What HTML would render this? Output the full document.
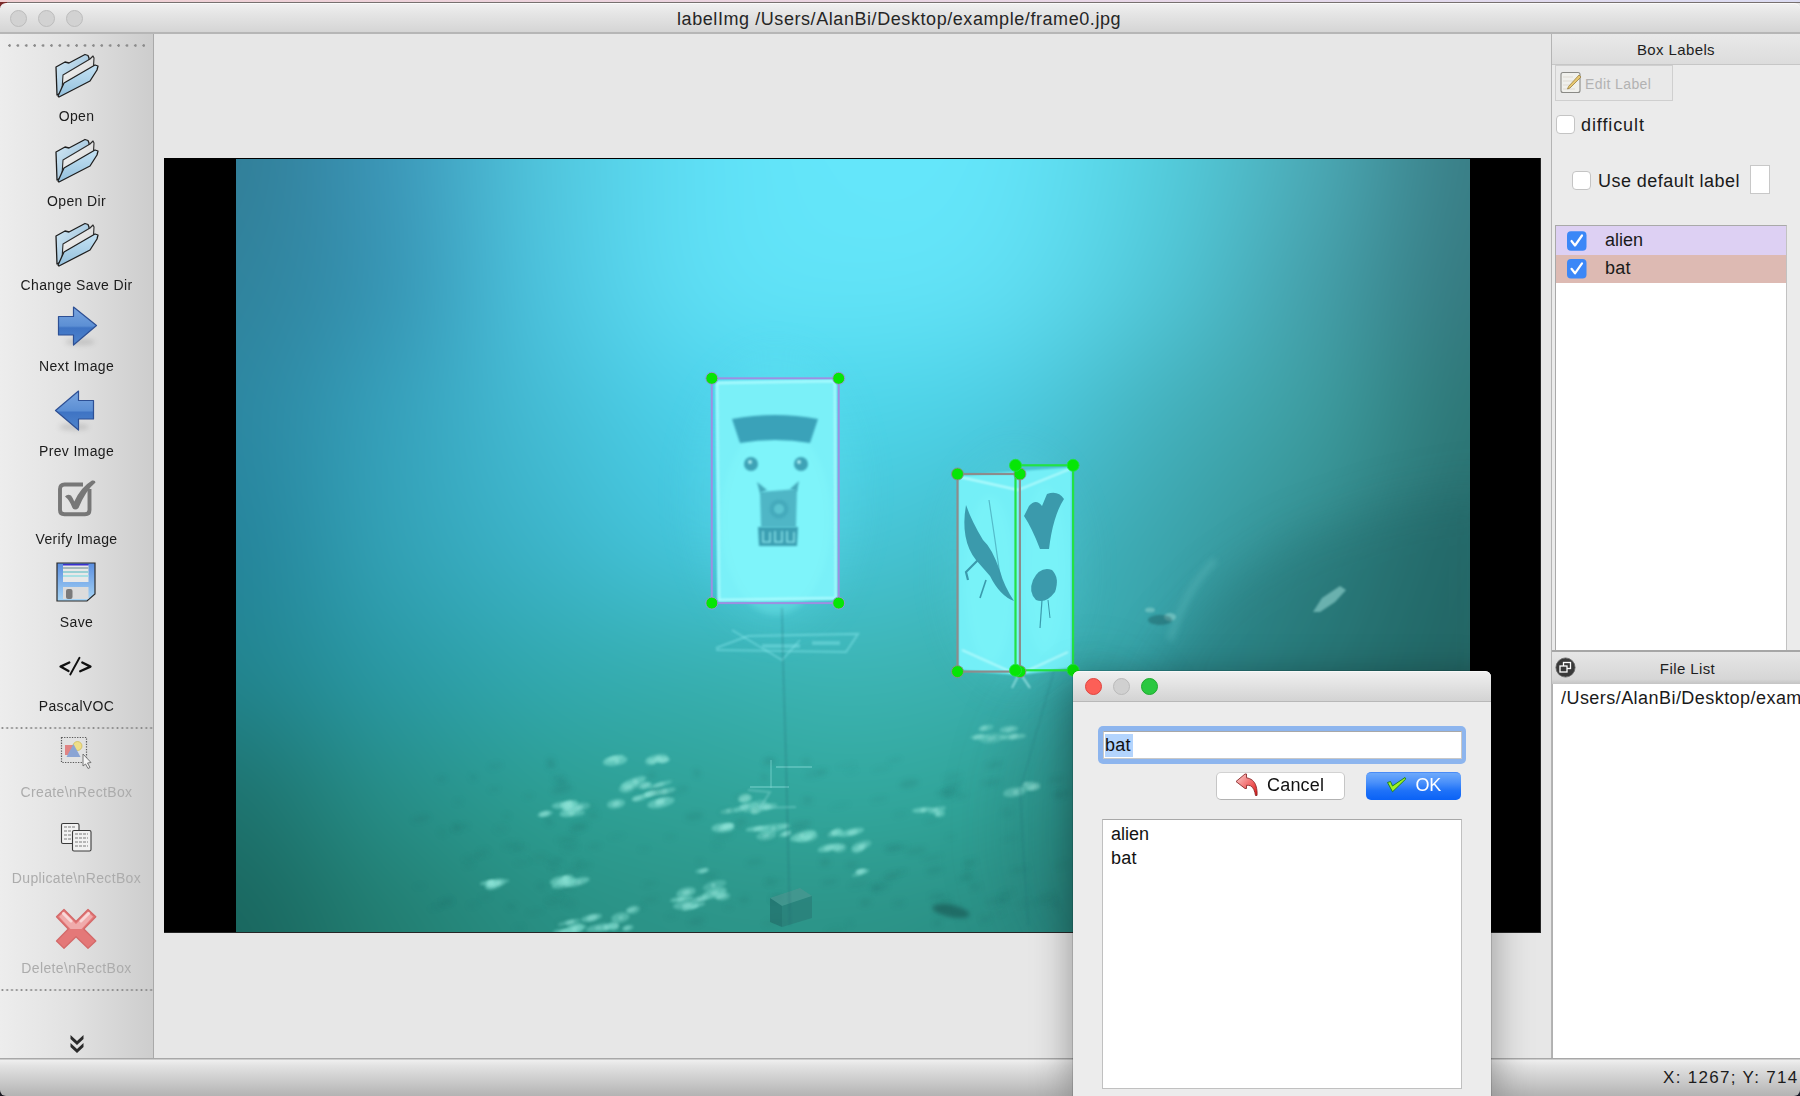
<!DOCTYPE html>
<html><head><meta charset="utf-8">
<style>
*{box-sizing:border-box;margin:0;padding:0}
html,body{width:1800px;height:1096px;overflow:hidden;background:#e8e8e8;font-family:"Liberation Sans",sans-serif;color:#1a1a1a}
.abs{position:absolute}
#topstrip{left:0;top:0;width:1800px;height:3px;background:linear-gradient(90deg,#f0cfd2 0%,#e8d6e6 60%,#dcdcf2 100%)}
#topline{left:0;top:1.6px;width:1800px;height:1.4px;background:#77706f}
#titlebar{left:0;top:3px;width:1800px;height:30px;background:linear-gradient(#f0f0f0 0%,#e6e6e6 30%,#d4d4d4 100%);border-top:1px solid #fbfbfb;border-radius:6px 6px 0 0}
#titleborder{left:0;top:32px;width:1800px;height:2px;background:#b6b6b6}
.tl{width:17px;height:17px;border-radius:50%;background:#d2d2d2;border:1px solid #bcbcbc;top:10px}
#title{left:677px;top:7px;font-size:18px;letter-spacing:0.57px;color:#262626;white-space:nowrap;line-height:24px}
#sidebar{left:0;top:34px;width:154px;height:1024px;background:linear-gradient(90deg,#ededed 0%,#e2e2e2 45%,#cdcdcd 100%);border-right:1px solid #a9a9a9}
#canvasbg{left:154px;top:34px;width:1397px;height:1024px;background:#e7e7e7}
#statusbar{left:0;top:1058px;width:1800px;height:38px;border-radius:0 0 6px 6px;background:linear-gradient(#a8a8a8 0px,#a8a8a8 1px,#efefef 2px,#e2e2e2 8px,#c6c6c6 26px,#b3b3b3 100%)}
.lbl{position:absolute;left:0;width:153px;text-align:center;font-size:14px;letter-spacing:0.35px;white-space:nowrap;color:#1c1c1c;line-height:16px}
.lbl.dis{color:#acacac}
.sep{position:absolute;left:0;width:154px;height:2px;background-image:radial-gradient(circle,#8a8a8a 0.9px,transparent 1.2px);background-size:4.8px 2px}
</style></head><body>
<div id="topstrip" class="abs"></div>
<div id="topline" class="abs"></div>
<div class="abs" style="left:0;top:2px;width:7px;height:6px;background:#7a2a2a"></div>
<div id="titlebar" class="abs"></div>
<div id="titleborder" class="abs"></div>
<div class="abs tl" style="left:9.8px"></div>
<div class="abs tl" style="left:37.6px"></div>
<div class="abs tl" style="left:66px"></div>
<div id="title" class="abs">labelImg /Users/AlanBi/Desktop/example/frame0.jpg</div>

<div id="sidebar" class="abs"></div>
<div id="canvasbg" class="abs"></div>
<div class="abs" style="left:0;top:1088px;width:8px;height:8px;background:#1a1a22"></div>
<div class="abs" style="left:1792px;top:1088px;width:8px;height:8px;background:#1a1a28"></div>
<div id="statusbar" class="abs"></div>

<!-- image -->
<div class="abs" style="left:164px;top:158px;width:1377px;height:775px;background:#000;border-right:1px solid #262626;border-bottom:1px solid #262626"></div>
<canvas id="uw" class="abs" width="1234" height="773" style="left:236px;top:159px;width:1234px;height:773px"></canvas>
<script>
(function(){
var C=document.getElementById('uw'),W=1234,H=773,ctx=C.getContext('2d');
var G=[
["32809a","3c98b8","50c4dc","5edef4","64e6fa","62e2f6","54ccdc","4aa8b4","3a8088"],
["30849e","3898b6","4cc2dc","5cdcf2","60e2f6","5edcf0","50c4d4","44a0aa","367c82"],
["2c88a2","36a0ba","44bcd4","4cd0e8","4ed4e8","4ccade","44b2be","3c9a9e","2e7878"],
["26869c","32a0b4","3cb4c8","44c4d8","46c4d4","42bac6","3ca6ae","348e90","2a7272"],
["22848e","2a98a2","32a8ae","38b0b2","3cb4b4","3aaeae","36a0a4","2e8484","286e6c"],
["1e7470","268c86","2c9c92","30a298","32a69c","30a096","2e908c","2a7c7a","266c68"],
["1a6860","227e72","288e82","2c9488","2c9488","2a8e84","2a827c","267470","246a66"]];
var nx=G[0].length,ny=G.length,P=[];
for(var j=0;j<ny;j++){P[j]=[];for(var i=0;i<nx;i++){var h=G[j][i];P[j][i]=[parseInt(h.substr(0,2),16),parseInt(h.substr(2,2),16),parseInt(h.substr(4,2),16)];}}
var id=ctx.createImageData(W,H),d=id.data;
function cr(p0,p1,p2,p3,t){return 0.5*((2*p1)+(-p0+p2)*t+(2*p0-5*p1+4*p2-p3)*t*t+(-p0+3*p1-3*p2+p3)*t*t*t);}
function gp(j,i,c){j=Math.max(0,Math.min(ny-1,j));i=Math.max(0,Math.min(nx-1,i));return P[j][i][c];}
for(var y=0;y<H;y++){var fy=y/(H-1)*(ny-1),j0=Math.min(ny-2,Math.floor(fy)),ty=fy-j0;
 for(var x=0;x<W;x++){var fx=x/(W-1)*(nx-1),i0=Math.min(nx-2,Math.floor(fx)),tx=fx-i0;
  var o=(y*W+x)*4;
  for(var c=0;c<3;c++){var r=[];for(var k=-1;k<3;k++){r.push(cr(gp(j0+k,i0-1,c),gp(j0+k,i0,c),gp(j0+k,i0+1,c),gp(j0+k,i0+2,c),tx));}
   d[o+c]=cr(r[0],r[1],r[2],r[3],ty);}
  d[o+3]=255;}}
ctx.putImageData(id,0,0);
ctx.translate(-236,-159);
function poly(pts,col){ctx.fillStyle=col;ctx.beginPath();ctx.moveTo(pts[0],pts[1]);for(var k=2;k<pts.length;k+=2)ctx.lineTo(pts[k],pts[k+1]);ctx.closePath();ctx.fill();}
function ell(x,y,rx,ry,col,rot){ctx.fillStyle=col;ctx.beginPath();ctx.ellipse(x,y,rx,ry,rot||0,0,Math.PI*2);ctx.fill();}
function ln(pts,col,w){ctx.strokeStyle=col;ctx.lineWidth=w;ctx.beginPath();ctx.moveTo(pts[0],pts[1]);for(var k=2;k<pts.length;k+=2)ctx.lineTo(pts[k],pts[k+1]);ctx.stroke();}
// glow around panel and prism
ctx.filter='blur(18px)';
ell(776,492,80,135,'rgba(110,235,245,0.2)');
ell(1015,570,65,115,'rgba(100,225,235,0.18)');
// seabed light patches
var seed=7;function rnd(){seed=(seed*16807)%2147483647;return (seed-1)/2147483646;}
ctx.filter='blur(1.8px)';
[[545,801,592,815,7],[600,782,669,806,11],[647,757,669,764,3],[614,757,629,762,2],[721,797,779,812,7],[713,824,728,830,2],[750,826,787,837,5],[798,830,864,852,9],[853,870,867,878,2],[673,863,724,911,9],[552,874,592,885,5],[468,874,501,889,4],[559,907,647,932,11],[1014,784,1043,793,4],[966,727,1014,740,5],[922,808,944,815,3]].forEach(function(c){
 for(var k=0;k<c[4];k++){var x=c[0]+rnd()*(c[2]-c[0]),y=c[1]+rnd()*(c[3]-c[1]);
  ell(x,y,5+rnd()*9,2+rnd()*3,'rgba(128,222,208,'+(0.35+rnd()*0.25)+')',-0.35+rnd()*0.3);
  ell(x+rnd()*4-2,y,2+rnd()*4,1.2+rnd()*1.5,'rgba(165,240,228,0.45)',-0.3);}
});
// dark speckles on seabed
ctx.filter='blur(2.5px)';
for(var k=0;k<160;k++){var x=420+rnd()*650,y=760+rnd()*172;ell(x,y,3+rnd()*8,1.5+rnd()*3,'rgba(25,95,92,'+(0.05+rnd()*0.1)+')',-0.2);}
ctx.filter='blur(0.6px)';
ln([750,787,789,787],'rgba(120,210,205,0.7)',1.6);ln([776,767,812,767],'rgba(120,210,205,0.7)',1.6);ln([771,760,771,788],'rgba(120,210,205,0.6)',1.4);
poly([770,898,800,888,812,896,782,906],'rgba(80,150,145,0.6)');
poly([770,898,782,906,782,927,770,922],'rgba(30,95,95,0.5)');poly([782,906,812,896,812,918,782,927],'rgba(40,110,108,0.45)');
ctx.filter='blur(2px)';
ell(951,911,19,6,'rgba(25,85,82,0.6)',0.2);

// right rock
ctx.filter='blur(30px)';ell(1090,830,90,160,'rgba(18,70,70,0.16)');
ctx.filter='blur(24px)';
poly([1130,720,1170,640,1220,585,1290,540,1390,505,1500,485,1500,720],'rgba(18,75,75,0.24)');
ctx.filter='blur(3px)';
ctx.strokeStyle='rgba(110,200,200,0.28)';ctx.lineWidth=7;ctx.beginPath();ctx.moveTo(1170,640);ctx.quadraticCurveTo(1185,590,1215,560);ctx.stroke();
ctx.filter='blur(1.2px)';
poly([1313,612,1322,598,1340,586,1346,590,1335,602,1320,612],'rgba(150,215,210,0.6)');
ell(1150,610,5,2.5,'rgba(150,215,210,0.5)',0);
ell(1170,617,6,4,'rgba(150,215,210,0.55)',0);
ell(1160,620,12,5,'rgba(20,70,75,0.35)',0);
// panel 1
ctx.filter='blur(1px)';
poly([716,381,836,379,837,600,718,602],'#7af0f8');
ctx.filter='blur(3px)';
ell(776,520,55,95,'rgba(140,255,255,0.25)');
ctx.filter='blur(0.8px)';
ln([717,383,835,381,836,598,719,600,717,383],'rgba(175,252,255,0.9)',2.5);
ctx.fillStyle='#3aa2b9';ctx.beginPath();ctx.moveTo(732,419);ctx.quadraticCurveTo(775,411,818,419);ctx.lineTo(810,443);ctx.quadraticCurveTo(775,437,740,443);ctx.closePath();ctx.fill();
ell(751,464,7,7,'#3ea2b6');ell(801,464,7,7,'#3ea2b6');
ell(750,462,2,2,'rgba(200,255,255,0.8)');ell(799,462,2,2,'rgba(200,255,255,0.8)');
poly([760,492,797,489,796,527,761,527],'#4fb6c6');
poly([757,482,767,490,760,493],'#45a8ba');poly([799,481,790,489,797,491],'#45a8ba');
ell(779,509,9.5,9.5,'#45aabc');ell(779,509,5,5,'#5cc4d0');
poly([758,527,798,527,797,546,759,546],'#3c9fb2');
ln([763,531,763,542,770,542,770,532],'rgba(150,240,245,0.8)',1.6);
ln([775,531,775,542,782,542,782,531],'rgba(150,240,245,0.8)',1.6);
ln([787,531,787,542,794,542,794,532],'rgba(150,240,245,0.8)',1.6);
// stand frame below panel
ctx.filter='blur(1px)';
ln([716,648,748,636,858,634,846,652,716,650],'rgba(140,235,240,0.45)',2.2);
ln([732,630,782,660,800,640],'rgba(140,235,240,0.45)',1.8);
ln([762,646,800,646],'rgba(150,240,245,0.35)',4);
ln([812,643,840,643],'rgba(150,240,245,0.35)',4);
ln([782,608,783,660,786,760,790,925],'rgba(30,100,110,0.45)',1);
ln([1060,650,1020,790,1028,925],'rgba(30,100,110,0.3)',1);
ln([748,790,770,792,760,808,796,807],'rgba(140,220,215,0.4)',2);
// prism
ctx.filter='blur(1px)';
poly([958,476,1072,467,1072,668,1018,675,958,670],'#74eff7');
ctx.filter='blur(4px)';
ell(990,580,25,85,'rgba(140,255,255,0.2)');ell(1045,570,22,85,'rgba(140,255,255,0.18)');
ctx.filter='blur(0.8px)';
ln([960,477,1018,490,1070,469],'rgba(200,255,255,0.85)',1.8);
ln([962,650,1018,675,1068,652],'rgba(200,255,255,0.85)',1.8);
ln([1018,490,1018,675],'rgba(150,240,245,0.6)',1.5);
ln([1018,676,1012,688],'rgba(200,255,255,0.7)',1.5);ln([1022,676,1030,688],'rgba(200,255,255,0.7)',1.5);
// bats
ctx.filter='blur(0.6px)';
ctx.fillStyle='#3b9aac';
ctx.beginPath();ctx.moveTo(966,505);ctx.quadraticCurveTo(960,540,976,560);ctx.lineTo(990,576);ctx.quadraticCurveTo(1000,596,1014,601);ctx.quadraticCurveTo(1004,586,1000,571);ctx.quadraticCurveTo(992,548,983,540);ctx.quadraticCurveTo(972,522,966,505);ctx.fill();
ln([978,560,966,572,968,580],'#3b9aac',2.2);ln([986,580,980,598],'#3b9aac',1.6);
ln([989,500,995,540,1002,590],'rgba(60,150,170,0.6)',1.2);
ctx.beginPath();ctx.moveTo(1040,549);ctx.quadraticCurveTo(1032,528,1024,516);ctx.lineTo(1029,506);ctx.quadraticCurveTo(1036,498,1042,506);ctx.lineTo(1047,494);ctx.quadraticCurveTo(1058,490,1064,499);ctx.quadraticCurveTo(1053,516,1049,549);ctx.closePath();ctx.fill();
ctx.beginPath();ctx.moveTo(1033,580);ctx.quadraticCurveTo(1040,566,1052,570);ctx.quadraticCurveTo(1060,578,1055,592);ctx.quadraticCurveTo(1046,604,1036,600);ctx.quadraticCurveTo(1028,592,1033,580);ctx.fill();
ln([1042,600,1040,628],'#3b9aac',1.2);ln([1048,600,1050,618],'#3b9aac',1);
ctx.filter='none';
})();
</script>



<!-- sidebar icons -->
<div class="abs" style="left:8px;top:44px;width:140px;height:3px;background-image:radial-gradient(circle at 1.5px 1.5px,#8c8c8c 1.1px,transparent 1.5px);background-size:8.4px 3px"></div>
<svg class="abs" style="left:0;top:0" width="154" height="1058" viewBox="0 0 154 1058">
<defs>
<filter id="sh" x="-50%" y="-100%" width="200%" height="300%"><feGaussianBlur stdDeviation="2.5"/></filter>
<linearGradient id="fb" x1="0" y1="0" x2="1" y2="1"><stop offset="0" stop-color="#d6ebf7"/><stop offset="1" stop-color="#8ab4d2"/></linearGradient>
<linearGradient id="ff" x1="0" y1="0" x2="0" y2="1"><stop offset="0" stop-color="#c4e2f4"/><stop offset="1" stop-color="#94c0dc"/></linearGradient>
<linearGradient id="fp" x1="0" y1="0" x2="1" y2="1"><stop offset="0" stop-color="#fafafa"/><stop offset="1" stop-color="#cfcfcf"/></linearGradient>
<linearGradient id="ab" x1="0" y1="0" x2="0" y2="1"><stop offset="0" stop-color="#7aa6e0"/><stop offset="0.5" stop-color="#5c8fd4"/><stop offset="0.55" stop-color="#3f74c4"/><stop offset="1" stop-color="#4f84cc"/></linearGradient>
<linearGradient id="xr" x1="0" y1="0" x2="0" y2="1"><stop offset="0" stop-color="#f6c4c4"/><stop offset="0.5" stop-color="#e27a7a"/><stop offset="1" stop-color="#e88a8a"/></linearGradient>
<linearGradient id="fl" x1="0" y1="0" x2="0" y2="1"><stop offset="0" stop-color="#5a8ee0"/><stop offset="1" stop-color="#a8d6f6"/></linearGradient>

</defs>
<g transform="translate(50,48)">
<path d="M7,47 L6,19 L15,14 L19,15 L35,6.5 L38,7.5 L39,10 L39,30 Z" fill="url(#fb)" stroke="#1e1e1e" stroke-width="1.3" stroke-linejoin="round"/>
<path d="M12,42 L13,27 L40,11 L43,8 L44,10 L43,27 Z" fill="url(#fp)" stroke="#2a2a2a" stroke-width="1.1" stroke-linejoin="round"/>
<path d="M8,48 L14,35 L45,17 L48,18 L47,22 L40,33 L9,49 Z" fill="url(#ff)" stroke="#1e1e1e" stroke-width="1.3" stroke-linejoin="round"/>
</g>
<g transform="translate(50,133)">
<path d="M7,47 L6,19 L15,14 L19,15 L35,6.5 L38,7.5 L39,10 L39,30 Z" fill="url(#fb)" stroke="#1e1e1e" stroke-width="1.3" stroke-linejoin="round"/>
<path d="M12,42 L13,27 L40,11 L43,8 L44,10 L43,27 Z" fill="url(#fp)" stroke="#2a2a2a" stroke-width="1.1" stroke-linejoin="round"/>
<path d="M8,48 L14,35 L45,17 L48,18 L47,22 L40,33 L9,49 Z" fill="url(#ff)" stroke="#1e1e1e" stroke-width="1.3" stroke-linejoin="round"/>
</g>
<g transform="translate(50,217)">
<path d="M7,47 L6,19 L15,14 L19,15 L35,6.5 L38,7.5 L39,10 L39,30 Z" fill="url(#fb)" stroke="#1e1e1e" stroke-width="1.3" stroke-linejoin="round"/>
<path d="M12,42 L13,27 L40,11 L43,8 L44,10 L43,27 Z" fill="url(#fp)" stroke="#2a2a2a" stroke-width="1.1" stroke-linejoin="round"/>
<path d="M8,48 L14,35 L45,17 L48,18 L47,22 L40,33 L9,49 Z" fill="url(#ff)" stroke="#1e1e1e" stroke-width="1.3" stroke-linejoin="round"/>
</g>

<!-- next arrow -->
<ellipse cx="80" cy="342" rx="15" ry="3.5" fill="rgba(0,0,0,0.12)" filter="url(#sh)"/>
<path d="M58.5,316.5 L73.5,316.5 L73.5,307 L96.5,325.5 L73.5,345 L73.5,335 L58.5,335 Z" fill="url(#ab)" stroke="#2d4f94" stroke-width="1.2" stroke-linejoin="round"/>
<!-- prev arrow -->
<ellipse cx="74" cy="427" rx="15" ry="3.5" fill="rgba(0,0,0,0.12)" filter="url(#sh)"/>
<path d="M93.5,400.5 L78.5,400.5 L78.5,391 L55.5,410.5 L78.5,430 L78.5,419 L93.5,419 Z" fill="url(#ab)" stroke="#2d4f94" stroke-width="1.2" stroke-linejoin="round"/>
<!-- verify -->
<g transform="translate(50,474)">
<path d="M33,10.5 L14.5,10.5 Q10,10.5 10,15 L10,36 Q10,40.3 14.5,40.3 L35,40.3 Q39.5,40.3 39.5,36 L39.5,15" fill="none" stroke="#777" stroke-width="3.9"/>
<path d="M15,22.5 Q17.5,19.5 21,21.5 Q23,24 24.3,27.5 Q31,13 42,6.5 Q45.5,6 45.5,8.5 Q36,16 28.5,34 Q27,35.5 25,35.5 Q23,35.3 22.3,33.5 Q19.5,26 15,22.5 Z" fill="#777"/>
</g>
<!-- save -->
<path d="M57,563 L95,563 L95,594 L87,601 L57,601 Z" fill="url(#fl)" stroke="#2a2a2a" stroke-width="1.2"/>
<rect x="63" y="565" width="25.5" height="17" fill="#e8e8e8"/>
<rect x="63" y="567" width="25.5" height="2" fill="#a6b8b8"/><rect x="63" y="571" width="25.5" height="2" fill="#9ad0d4"/><rect x="63" y="575" width="25.5" height="2" fill="#a8e0e4"/>
<rect x="63" y="564" width="25.5" height="1.5" fill="#3a30d0"/>
<rect x="63" y="587" width="25.5" height="12" fill="#dcdcdc"/>
<rect x="66" y="589" width="6.5" height="10" rx="2" fill="#7a7a7a"/>
<!-- </> -->
<path d="M69.3,662.5 L60.5,666.6 L68.5,671" fill="none" stroke="#111" stroke-width="2.3" stroke-linecap="round" stroke-linejoin="round"/>
<path d="M79.5,657.8 L70.3,674.5" fill="none" stroke="#111" stroke-width="1.9" stroke-linecap="round"/>
<path d="M82.3,662.5 L90.5,666.6 L80.2,671.3" fill="none" stroke="#111" stroke-width="2.3" stroke-linecap="round" stroke-linejoin="round"/>
<!-- create -->
<rect x="61.5" y="737.5" width="25" height="25" fill="#e2e2e2" stroke="#5a5a5a" stroke-width="1.2" stroke-dasharray="1.3 1.3"/>
<rect x="65" y="745" width="9" height="10" fill="#e07a7a" opacity="0.9"/>
<circle cx="77.5" cy="746" r="4.5" fill="#eede88" stroke="#c8b040" stroke-width="0.6"/>
<path d="M73.5,744 L80.5,757 L66.5,757 Z" fill="#8aa4d4"/>
<path d="M83,754 L83,766 L85.5,764 L88,768.5 L90,767.5 L87.5,763 L91,762.5 Z" fill="#f4f4f4" stroke="#6a6a6a" stroke-width="0.9"/>
<!-- duplicate -->
<rect x="61.5" y="823.5" width="17.5" height="20" rx="1.5" fill="#f2f2f2" stroke="#3a3a3a" stroke-width="1.1"/>
<rect x="72.5" y="830.5" width="18.5" height="20.5" rx="1.5" fill="#f2f2f2" stroke="#3a3a3a" stroke-width="1.1"/>
<path d="M64,827h11M64,831h7M64,835h7M64,839h7M75,834h13M75,838h13M75,842h13M75,846h13" stroke="#7a7a7a" stroke-width="1" stroke-dasharray="3 1"/>
<!-- delete X -->
<g transform="translate(50,900)">
<path d="M14,9.5 L26,21.5 L38,9.5 L45.8,16.8 L33.8,29 L45.8,41 L38,48.3 L26,36.8 L14,48.3 L6.5,41 L18.3,29 L6.5,16.8 Z" fill="#e47878" stroke="#d46a6a" stroke-width="1.3" stroke-linejoin="round"/>
<path d="M14,12 L26,24 L38,12 L43,16.8 L31.5,29 L20.5,29 L9,16.8 Z" fill="#f2b4b4" opacity="0.85"/>
<path d="M13.5,13.5 L21,21" stroke="#fbe4e4" stroke-width="3" stroke-linecap="round" opacity="0.8"/>
<path d="M38.5,13.5 L31,21" stroke="#fbe4e4" stroke-width="3" stroke-linecap="round" opacity="0.8"/>
</g>
<!-- chevron -->
<path d="M70.5,1035 L77,1041 L83.5,1035 L83.5,1039 L77,1045 L70.5,1039 Z M70.5,1043 L77,1049 L83.5,1043 L83.5,1047 L77,1053 L70.5,1047 Z" fill="#2a2a2a"/>
</svg>
<div class="sep" style="top:727px"></div>
<div class="sep" style="top:989px"></div>


<!-- right panel -->
<div class="abs" style="left:1551px;top:34px;width:249px;height:1024px;background:#ebebeb;border-left:1px solid #b4b4b4"></div>
<div class="abs" style="left:1552px;top:34px;width:248px;height:31px;background:linear-gradient(#e9e9e9,#dcdcdc);border-bottom:1px solid #c6c6c6"></div>
<div class="abs txt" style="left:1552px;top:41px;width:248px;text-align:center;font-size:15px;line-height:18px;letter-spacing:0.38px;color:#1e1e1e">Box Labels</div>
<div class="abs" style="left:1555px;top:65px;width:118px;height:36px;border:1px solid #cfcfcf;background:#e9e9e9"></div>
<svg class="abs" style="left:1558px;top:70px" width="26" height="26" viewBox="0 0 26 26">
<rect x="3" y="2.5" width="19" height="20" rx="2" fill="#f0f0ec" stroke="#8a8a86" stroke-width="1.1"/>
<path d="M5,7h10M5,11h10M5,15h10M5,19h12" stroke="#dedad2" stroke-width="1"/>
<path d="M21,5 L23,7 L12,18 L9.5,19 L10.5,16.5 Z" fill="#e8c870" stroke="#9a8040" stroke-width="0.8"/>
</svg>
<div class="abs" style="left:1585px;top:76px;font-size:14px;line-height:16px;letter-spacing:0.4px;color:#b2b2b2;white-space:nowrap">Edit Label</div>
<div class="abs" style="left:1556px;top:115px;width:19px;height:19px;border-radius:4px;background:#fff;border:1px solid #c4c4c4"></div>
<div class="abs" style="left:1581px;top:115px;font-size:18px;line-height:20px;letter-spacing:0.9px;color:#1a1a1a;white-space:nowrap">difficult</div>
<div class="abs" style="left:1572px;top:171px;width:19px;height:19px;border-radius:4px;background:#fff;border:1px solid #c4c4c4"></div>
<div class="abs" style="left:1598px;top:171px;font-size:18px;line-height:20px;letter-spacing:0.46px;color:#1a1a1a;white-space:nowrap">Use default label</div>
<div class="abs" style="left:1750px;top:165px;width:20px;height:29px;background:#fff;border:1px solid #c8c8c8"></div>
<div class="abs" style="left:1555px;top:225px;width:232px;height:426px;background:#fff;border:1px solid #a9a9a9;border-right-color:#c2c2c2;border-bottom:none"></div>
<div class="abs" style="left:1556px;top:226px;width:230px;height:29px;background:#ddd0f3"></div>
<div class="abs" style="left:1556px;top:255px;width:230px;height:28px;background:#ddbab3"></div>
<svg class="abs" style="left:1566px;top:230px" width="22" height="50" viewBox="0 0 22 50">
<rect x="1" y="1.2" width="19.5" height="19.5" rx="4" fill="#3b87f7"/>
<path d="M5.5,11 L9,15.5 L16,5.5" fill="none" stroke="#fff" stroke-width="2.2" stroke-linecap="round" stroke-linejoin="round"/>
<rect x="1" y="29" width="19.5" height="19.5" rx="4" fill="#3b87f7"/>
<path d="M5.5,38.8 L9,43.3 L16,33.3" fill="none" stroke="#fff" stroke-width="2.2" stroke-linecap="round" stroke-linejoin="round"/>
</svg>
<div class="abs" style="left:1605px;top:230px;font-size:18px;line-height:20px;color:#1a1a1a;white-space:nowrap">alien</div>
<div class="abs" style="left:1605px;top:258px;font-size:18px;line-height:20px;letter-spacing:0.3px;color:#1a1a1a;white-space:nowrap">bat</div>
<div class="abs" style="left:1552px;top:650px;width:248px;height:2px;background:#a6a6a6"></div>
<div class="abs" style="left:1552px;top:652px;width:248px;height:32px;background:linear-gradient(#e6e6e6,#d6d6d6 85%,#c4c4c4)"></div>
<svg class="abs" style="left:1554px;top:656px" width="23" height="23" viewBox="0 0 23 23">
<circle cx="11.5" cy="11.5" r="9.6" fill="#3a3a3a" stroke="#6a6a6a" stroke-width="0.8"/>
<rect x="9.5" y="6.5" width="7" height="6" fill="none" stroke="#fff" stroke-width="1.3"/>
<rect x="6" y="10" width="7" height="6" fill="#3a3a3a" stroke="#fff" stroke-width="1.3"/>
</svg>
<div class="abs" style="left:1552px;top:660px;width:248px;padding-left:23px;text-align:center;font-size:15px;line-height:18px;letter-spacing:0.4px;color:#1e1e1e">File List</div>
<div class="abs" style="left:1552px;top:684px;width:248px;height:374px;background:#fff;border-left:1px solid #b0b0b0"></div>
<div class="abs" style="left:1561px;top:688px;width:239px;overflow:hidden;font-size:18px;line-height:20px;letter-spacing:0.45px;color:#1a1a1a;white-space:nowrap">/Users/AlanBi/Desktop/example/frame0.jpg</div>
<div class="abs" style="left:1663px;top:1068px;font-size:17px;line-height:20px;letter-spacing:1.3px;color:#1c1c1c;white-space:nowrap">X: 1267; Y: 714</div>



<!-- boxes -->
<svg class="abs" style="left:0;top:0" width="1800" height="1096" viewBox="0 0 1800 1096">
<rect x="711.8" y="378.3" width="126.9" height="224.8" fill="none" stroke="#9d8fe2" stroke-width="2"/>
<rect x="957.5" y="474" width="62.4" height="197.6" fill="none" stroke="#8c8c8c" stroke-width="2.2"/>
<rect x="1015.5" y="465.3" width="57.6" height="205" fill="none" stroke="#22e244" stroke-width="2.2"/>
<g fill="#06e606" stroke-width="0.9">
<circle cx="711.8" cy="378.3" r="6" stroke="#9d8fe2"/><circle cx="838.7" cy="378.3" r="6" stroke="#9d8fe2"/>
<circle cx="711.8" cy="603.1" r="6" stroke="#9d8fe2"/><circle cx="838.7" cy="603.1" r="6" stroke="#9d8fe2"/>
<circle cx="957.5" cy="474" r="6" stroke="#8c8c8c"/><circle cx="1019.9" cy="474" r="6" stroke="#8c8c8c"/>
<circle cx="957.5" cy="671.6" r="6" stroke="#8c8c8c"/><circle cx="1019.9" cy="671.6" r="6" stroke="#8c8c8c"/>
<circle cx="1015.5" cy="465.3" r="6" stroke="#22e244"/><circle cx="1073.1" cy="465.3" r="6" stroke="#22e244"/>
<circle cx="1015.5" cy="670.3" r="6" stroke="#22e244"/><circle cx="1073.1" cy="670.3" r="6" stroke="#22e244"/>
</g>
</svg>

<!-- dialog -->
<div class="abs" style="left:1073px;top:671px;width:418px;height:425px;background:#ececec;border-radius:6px 6px 0 0;box-shadow:0 8px 40px rgba(0,0,0,0.38),0 0 0 0.5px rgba(0,0,0,0.25)"></div>
<div class="abs" style="left:1073px;top:671px;width:418px;height:31px;border-radius:6px 6px 0 0;background:linear-gradient(#efefef,#e4e4e4 40%,#d3d3d3);border-top:1px solid #f8f8f8;border-bottom:1px solid #b8b8b8"></div>
<div class="abs" style="left:1085px;top:678px;width:17px;height:17px;border-radius:50%;background:#fc5f57;border:0.8px solid #e0443e"></div>
<div class="abs" style="left:1113px;top:678px;width:17px;height:17px;border-radius:50%;background:#d0d0d0;border:0.8px solid #bababa"></div>
<div class="abs" style="left:1141px;top:678px;width:17px;height:17px;border-radius:50%;background:#2ac840;border:0.8px solid #1eaa2e"></div>
<div class="abs" style="left:1098px;top:726px;width:368px;height:38px;border-radius:5px;background:#8db5ee"></div>
<div class="abs" style="left:1103px;top:731px;width:359px;height:28px;background:#fff;border-top:1px solid #a8a8a8;border-left:1px solid #c8c8c8;border-right:1px solid #c8c8c8;border-bottom:1px solid #c8c8c8"></div>
<div class="abs" style="left:1105px;top:734px;width:28px;height:23px;background:#b3d4fd"></div>
<div class="abs" style="left:1105px;top:735px;font-size:18px;line-height:20px;letter-spacing:0.3px;color:#111;white-space:nowrap">bat</div>
<div class="abs" style="left:1216px;top:772px;width:129px;height:28px;border-radius:5px;background:#fff;border:1px solid #c6c6c6;border-top-color:#d2d2d2;border-bottom-color:#b2b2b2"></div>
<svg class="abs" style="left:1225px;top:768px" width="40" height="32" viewBox="0 0 40 32">
<defs><linearGradient id="cr" x1="0" y1="0" x2="1" y2="1"><stop offset="0" stop-color="#fbd0d0"/><stop offset="0.6" stop-color="#f06060"/><stop offset="1" stop-color="#e01010"/></linearGradient></defs>
<path d="M11,13.5 L20,6 L21.5,6 L21.5,9.8 C26,10.5 29.5,13 31,18 C32,21 32.3,24.5 32,27.5 L30.5,27.5 C29.8,23 28.5,19.5 25.5,17.8 C24.5,17.3 23,17.3 21.5,17.3 L21.5,20.5 L20,20.5 Z" fill="url(#cr)" stroke="#8a2a2a" stroke-width="0.9" stroke-linejoin="round"/>
</svg>
<div class="abs" style="left:1267px;top:775px;font-size:18px;line-height:20px;letter-spacing:0.2px;color:#111;white-space:nowrap">Cancel</div>
<div class="abs" style="left:1366px;top:772px;width:95px;height:28px;border-radius:5px;background:linear-gradient(#6eaafb 0%,#4a90fa 35%,#1f72f8 65%,#0a62f6 100%);border-top:1px solid #4a8cf6"></div>
<svg class="abs" style="left:1380px;top:770px" width="32" height="28" viewBox="0 0 32 28">
<path d="M7.5,12.5 L10.5,11.5 L12.5,16 L25,7.5 L25.8,9 L12.5,21.8 Z" fill="#9ef226" stroke="#1a7a1a" stroke-width="0.9" stroke-linejoin="round"/>
</svg>
<div class="abs" style="left:1415.5px;top:775px;font-size:18px;line-height:20px;letter-spacing:-0.3px;color:#fff;white-space:nowrap">OK</div>
<div class="abs" style="left:1102px;top:819px;width:360px;height:270px;background:#fff;border:1px solid #c0c0c0;border-top-color:#a8a8a8"></div>
<div class="abs" style="left:1111px;top:823.5px;font-size:18px;line-height:20px;color:#111;white-space:nowrap">alien</div>
<div class="abs" style="left:1111px;top:848px;font-size:18px;line-height:20px;letter-spacing:0.3px;color:#111;white-space:nowrap">bat</div>

<!-- toolbar labels -->
<div class="lbl" style="top:108px">Open</div>
<div class="lbl" style="top:193px">Open Dir</div>
<div class="lbl" style="top:277px">Change Save Dir</div>
<div class="lbl" style="top:358px">Next Image</div>
<div class="lbl" style="top:443px">Prev Image</div>
<div class="lbl" style="top:531px">Verify Image</div>
<div class="lbl" style="top:614px">Save</div>
<div class="lbl" style="top:698px">PascalVOC</div>
<div class="lbl dis" style="top:784px">Create\nRectBox</div>
<div class="lbl dis" style="top:870px">Duplicate\nRectBox</div>
<div class="lbl dis" style="top:960px">Delete\nRectBox</div>

</body></html>
